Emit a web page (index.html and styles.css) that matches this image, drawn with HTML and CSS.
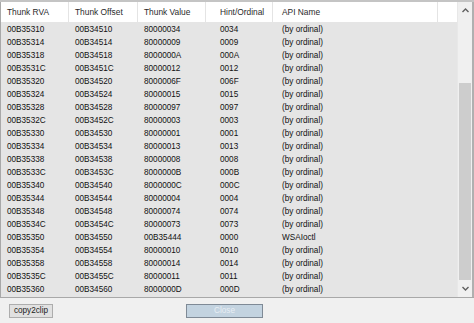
FILE: index.html
```html
<!DOCTYPE html>
<html>
<head>
<meta charset="utf-8">
<link rel="stylesheet" href="styles.css">
</head>
<body>
<div class="frame">
  <div class="topstrip"></div>
  <div class="list">
    <div class="table">
      <div class="row head">
        <div class="c c1">Thunk RVA</div>
        <div class="c c2">Thunk Offset</div>
        <div class="c c3">Thunk Value</div>
        <div class="c c4">Hint/Ordinal</div>
        <div class="c c5">API Name</div>
        <div class="c c6"></div>
      </div>
      <div class="body">
        <div class="row"><div class="c c1">00B35310</div><div class="c c2">00B34510</div><div class="c c3">80000034</div><div class="c c4">0034</div><div class="c c5">(by ordinal)</div></div>
        <div class="row"><div class="c c1">00B35314</div><div class="c c2">00B34514</div><div class="c c3">80000009</div><div class="c c4">0009</div><div class="c c5">(by ordinal)</div></div>
        <div class="row"><div class="c c1">00B35318</div><div class="c c2">00B34518</div><div class="c c3">8000000A</div><div class="c c4">000A</div><div class="c c5">(by ordinal)</div></div>
        <div class="row"><div class="c c1">00B3531C</div><div class="c c2">00B3451C</div><div class="c c3">80000012</div><div class="c c4">0012</div><div class="c c5">(by ordinal)</div></div>
        <div class="row"><div class="c c1">00B35320</div><div class="c c2">00B34520</div><div class="c c3">8000006F</div><div class="c c4">006F</div><div class="c c5">(by ordinal)</div></div>
        <div class="row"><div class="c c1">00B35324</div><div class="c c2">00B34524</div><div class="c c3">80000015</div><div class="c c4">0015</div><div class="c c5">(by ordinal)</div></div>
        <div class="row"><div class="c c1">00B35328</div><div class="c c2">00B34528</div><div class="c c3">80000097</div><div class="c c4">0097</div><div class="c c5">(by ordinal)</div></div>
        <div class="row"><div class="c c1">00B3532C</div><div class="c c2">00B3452C</div><div class="c c3">80000003</div><div class="c c4">0003</div><div class="c c5">(by ordinal)</div></div>
        <div class="row"><div class="c c1">00B35330</div><div class="c c2">00B34530</div><div class="c c3">80000001</div><div class="c c4">0001</div><div class="c c5">(by ordinal)</div></div>
        <div class="row"><div class="c c1">00B35334</div><div class="c c2">00B34534</div><div class="c c3">80000013</div><div class="c c4">0013</div><div class="c c5">(by ordinal)</div></div>
        <div class="row"><div class="c c1">00B35338</div><div class="c c2">00B34538</div><div class="c c3">80000008</div><div class="c c4">0008</div><div class="c c5">(by ordinal)</div></div>
        <div class="row"><div class="c c1">00B3533C</div><div class="c c2">00B3453C</div><div class="c c3">8000000B</div><div class="c c4">000B</div><div class="c c5">(by ordinal)</div></div>
        <div class="row"><div class="c c1">00B35340</div><div class="c c2">00B34540</div><div class="c c3">8000000C</div><div class="c c4">000C</div><div class="c c5">(by ordinal)</div></div>
        <div class="row"><div class="c c1">00B35344</div><div class="c c2">00B34544</div><div class="c c3">80000004</div><div class="c c4">0004</div><div class="c c5">(by ordinal)</div></div>
        <div class="row"><div class="c c1">00B35348</div><div class="c c2">00B34548</div><div class="c c3">80000074</div><div class="c c4">0074</div><div class="c c5">(by ordinal)</div></div>
        <div class="row"><div class="c c1">00B3534C</div><div class="c c2">00B3454C</div><div class="c c3">80000073</div><div class="c c4">0073</div><div class="c c5">(by ordinal)</div></div>
        <div class="row"><div class="c c1">00B35350</div><div class="c c2">00B34550</div><div class="c c3">00B35444</div><div class="c c4">0000</div><div class="c c5">WSAIoctl</div></div>
        <div class="row"><div class="c c1">00B35354</div><div class="c c2">00B34554</div><div class="c c3">80000010</div><div class="c c4">0010</div><div class="c c5">(by ordinal)</div></div>
        <div class="row"><div class="c c1">00B35358</div><div class="c c2">00B34558</div><div class="c c3">80000014</div><div class="c c4">0014</div><div class="c c5">(by ordinal)</div></div>
        <div class="row"><div class="c c1">00B3535C</div><div class="c c2">00B3455C</div><div class="c c3">80000011</div><div class="c c4">0011</div><div class="c c5">(by ordinal)</div></div>
        <div class="row"><div class="c c1">00B35360</div><div class="c c2">00B34560</div><div class="c c3">8000000D</div><div class="c c4">000D</div><div class="c c5">(by ordinal)</div></div>
      </div>
    </div>
    <div class="scrollbar">
      <div class="arrow"><svg width="7" height="5" viewBox="0 0 7 5"><path d="M0.5 4 L3.5 1 L6.5 4" fill="none" stroke="#606060" stroke-width="1.4"/></svg></div>
      <div class="track"></div>
      <div class="thumb"></div>
      <div class="arrow"><svg width="7" height="5" viewBox="0 0 7 5"><path d="M0.5 1 L3.5 4 L6.5 1" fill="none" stroke="#606060" stroke-width="1.4"/></svg></div>
    </div>
  </div>
  <div class="footer">
    <button class="btn copy">copy2clip</button>
    <button class="btn close" disabled>Close</button>
  </div>
</div>
</body>
</html>
```

FILE: styles.css
```css
html, body {
  margin: 0;
  padding: 0;
}
body {
  width: 474px;
  height: 323px;
  background: #f0f0f0;
  font-family: "Liberation Sans", Arial, sans-serif;
  font-size: 8.2px;
  color: #111111;
  overflow: hidden;
}
.frame {
  display: flex;
  flex-direction: column;
  height: 323px;
}
.topstrip {
  height: 2px;
  background: #c4c4c4;
}
.list {
  display: flex;
  height: 296px;
  border-left: 1px solid #a8a8a8;
  border-bottom: 1px solid #a8a8a8;
  box-sizing: border-box;
  background: #e5e5e5;
}
.table {
  flex: 1;
  display: flex;
  flex-direction: column;
}
.row {
  display: flex;
  height: 13px;
  align-items: center;
}
.row.head {
  height: 20px;
  background: #ffffff;
  color: #2a2a2a;
  font-size: 8.4px;
}
.row.head .c {
  border-right: 1px solid #e4e4e4;
  height: 20px;
  line-height: 20px;
}
.c {
  box-sizing: border-box;
  padding-left: 6px;
  white-space: nowrap;
  overflow: hidden;
}
.c1 { width: 68px; }
.c2 { width: 69px; }
.c3 { width: 68px; }
.c4 { width: 67px; padding-left: 14px; }
.c5 { width: 165px; padding-left: 9px; }
.c6 { flex: 1; border-right: none !important; }
.body {
  padding-top: 1px;
}
.scrollbar {
  width: 17px;
  display: flex;
  flex-direction: column;
  background: #f0f0f0;
  border-left: 1px solid #e8e8e8;
  border-right: 2px solid #b0b0b0;
  box-sizing: border-box;
}
.arrow {
  height: 17px;
  display: flex;
  align-items: center;
  justify-content: center;
}
.track {
  height: 64px;
}
.thumb {
  flex: 1;
  margin: 0 1px;
  background: #cdcdcd;
}
.footer {
  flex: 1;
  display: flex;
  align-items: center;
  padding-left: 9px;
}
.btn {
  font-family: "Liberation Sans", Arial, sans-serif;
  font-size: 8.2px;
  padding: 0;
  margin: 0;
  box-sizing: border-box;
  height: 14px;
}
.copy {
  width: 44px;
  background: #e1e1e1;
  border: 1px solid #adadad;
  color: #222;
}
.close {
  width: 77px;
  margin-left: 133px;
  background: #c3d3e0;
  border: 1px solid #7f8a96;
  color: #e8eef4;
}
```
